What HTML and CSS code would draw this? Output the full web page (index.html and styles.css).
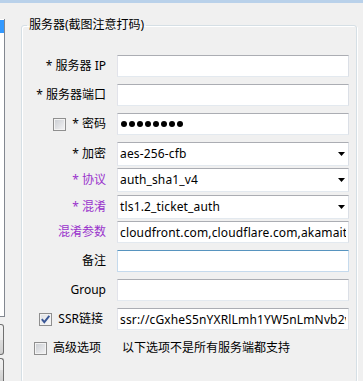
FILE: index.html
```html
<!DOCTYPE html>
<html lang="zh-CN">
<head>
<meta charset="utf-8">
<title>编辑服务器</title>
<link rel="stylesheet" href="styles.css">
</head>
<body>
<div class="topbar"></div>
<div class="main">
  <div class="side">
    <div class="listbox"><div class="sel"></div></div>
    <div class="btn"></div>
    <div class="btn last"></div>
  </div>
  <fieldset class="group">
    <legend class="group-title">服务器(截图注意打码)</legend>
    <div class="row first">
      <label class="lbl">* 服务器 IP</label>
      <input class="field" type="text" value="" readonly>
    </div>
    <div class="row">
      <label class="lbl">* 服务器端口</label>
      <input class="field" type="text" value="" readonly>
    </div>
    <div class="row">
      <label class="lbl"><span class="cb"></span><span>* 密码</span></label>
      <div class="field pw" aria-label="密码"><i></i><i></i><i></i><i></i><i></i><i></i><i></i><i></i></div>
    </div>
    <div class="row combo-row">
      <label class="lbl">* 加密</label>
      <div class="field combo"><span class="val">aes-256-cfb</span><svg class="arrow" width="7" height="4" viewBox="0 0 7 4"><polygon points="0,0 7,0 3.5,4" fill="#000"/></svg></div>
    </div>
    <div class="row combo-row g2">
      <label class="lbl purple">* 协议</label>
      <div class="field combo"><span class="val">auth_sha1_v4</span><svg class="arrow" width="7" height="4" viewBox="0 0 7 4"><polygon points="0,0 7,0 3.5,4" fill="#000"/></svg></div>
    </div>
    <div class="row combo-row g3">
      <label class="lbl purple">* 混淆</label>
      <div class="field combo"><span class="val">tls1.2_ticket_auth</span><svg class="arrow" width="7" height="4" viewBox="0 0 7 4"><polygon points="0,0 7,0 3.5,4" fill="#000"/></svg></div>
    </div>
    <div class="row g2">
      <label class="lbl purple">混淆参数</label>
      <input class="field" type="text" value="cloudfront.com,cloudflare.com,akamaitechnologies.com" readonly>
    </div>
    <div class="row">
      <label class="lbl">备注</label>
      <input class="field hover" type="text" value="" readonly>
    </div>
    <div class="row">
      <label class="lbl">Group</label>
      <input class="field" type="text" value="" readonly>
    </div>
    <div class="row">
      <label class="lbl chk ssr"><span class="cb checked"><svg width="11" height="11" viewBox="0 0 11 11"><path d="M1.8 5.2 L4.3 8.2 L9.3 1.8" fill="none" stroke="#3a5796" stroke-width="1.9"/></svg></span><span>SSR链接</span></label>
      <input class="field" type="text" value="ssr://cGxheS5nYXRlLmh1YW5nLmNvb2vNDQzOmF1dGhfc2hhMV92NDphZXM" readonly>
    </div>
    <div class="row">
      <label class="lbl chk adv"><span class="cb"></span><span>高级选项</span></label>
      <span class="note">以下选项不是所有服务端都支持</span>
    </div>
  </fieldset>
</div>
</body>
</html>
```
FILE: styles.css
```css
html, body {
  margin: 0;
  padding: 0;
}
body {
  width: 363px;
  height: 381px;
  overflow: hidden;
  background: #f0f0f0;
  font-family: "Noto Sans", "Noto Sans CJK SC", sans-serif;
  font-size: 12px;
  line-height: 16px;
  color: #000;
}
.topbar {
  height: 3px;
  background: #b9d1ea;
}
.main {
  display: flex;
  align-items: flex-start;
  height: 378px;
  overflow: hidden;
}
.side {
  width: 5px;
  flex: none;
  display: flex;
  flex-direction: column;
}
.listbox {
  margin-top: 16px;
  height: 298px;
  box-sizing: border-box;
  background: #fff;
  border-right: 1px solid #828790;
  border-bottom: 1px solid #828790;
}
.listbox .sel {
  margin-top: 1px;
  height: 13px;
  background: #3399ff;
}
.btn {
  margin-top: 7px;
  width: 4px;
  height: 31px;
  box-sizing: border-box;
  border: 1px solid #707070;
  border-left: none;
  border-radius: 0 3px 3px 0;
  background: linear-gradient(#f2f2f2, #ebebeb 50%, #dddddd 50%, #cfcfcf);
}
.btn.last {
  margin-top: 3px;
  height: 23px;
  border-bottom: none;
  border-radius: 0 3px 0 0;
}
.group {
  margin: 14px 0 0 16px;
  padding: 0 7px 0 0;
  width: 336px;
  height: 366px;
  box-sizing: border-box;
  min-width: 0;
  border: 1px solid #d5dfe5;
  border-radius: 3px;
  box-shadow: inset 1px 1px 0 #fff, 1px 1px 0 #fff;
}
.group-title {
  margin-left: 5px;
  padding: 0 2px;
  line-height: 16px;
}
.row {
  display: flex;
  align-items: center;
  height: 22px;
  margin-top: 7px;
}
.row.first {
  margin-top: 22px;
}
.row.combo-row {
  height: 24px;
}
.row.g2 {
  margin-top: 2px;
}
.row.g3 {
  margin-top: 3px;
}
.lbl {
  flex: none;
  width: 84px;
  margin-right: 11px;
  display: flex;
  align-items: center;
  justify-content: flex-end;
  gap: 6px;
  white-space: nowrap;
}
.lbl.purple {
  color: #9933cc;
}
.lbl.ssr {
  padding-right: 3px;
  box-sizing: border-box;
}
.lbl.adv {
  padding-right: 5px;
  box-sizing: border-box;
}
.field {
  flex: none;
  width: 232px;
  height: 100%;
  box-sizing: border-box;
  margin: 0;
  padding: 0 2px 0 2px;
  font: inherit;
  letter-spacing: 0.15px;
  color: #000;
  background: #fff;
  border: 1px solid #dbdfe6;
  border-top-color: #abadb3;
  border-left-color: #e2e3ea;
  border-bottom-color: #e3e9ef;
  border-radius: 0;
  outline: none;
}
.field.hover {
  border-color: #c5daed;
  border-top-color: #5794bf;
}
.combo {
  display: flex;
  align-items: center;
  justify-content: space-between;
  padding-right: 3px;
}
.combo .val {
  white-space: nowrap;
}
.pw {
  display: flex;
  align-items: center;
  gap: 2px;
  padding-left: 3px;
}
.pw i {
  width: 6px;
  height: 6px;
  border-radius: 50%;
  background: #000;
}
.cb {
  flex: none;
  width: 13px;
  height: 13px;
  box-sizing: border-box;
  border: 1px solid #8f8f8f;
  background: linear-gradient(135deg, #c9ccd1, #f4f4f5);
  box-shadow: inset 0 0 0 1px #f3f3f3;
  display: flex;
  align-items: center;
  justify-content: center;
}
.cb.checked {
  background: linear-gradient(135deg, #dfe1e4, #fafafa);
}
.cb svg {
  display: block;
}
.note {
  margin-left: 5px;
  white-space: nowrap;
}
```
